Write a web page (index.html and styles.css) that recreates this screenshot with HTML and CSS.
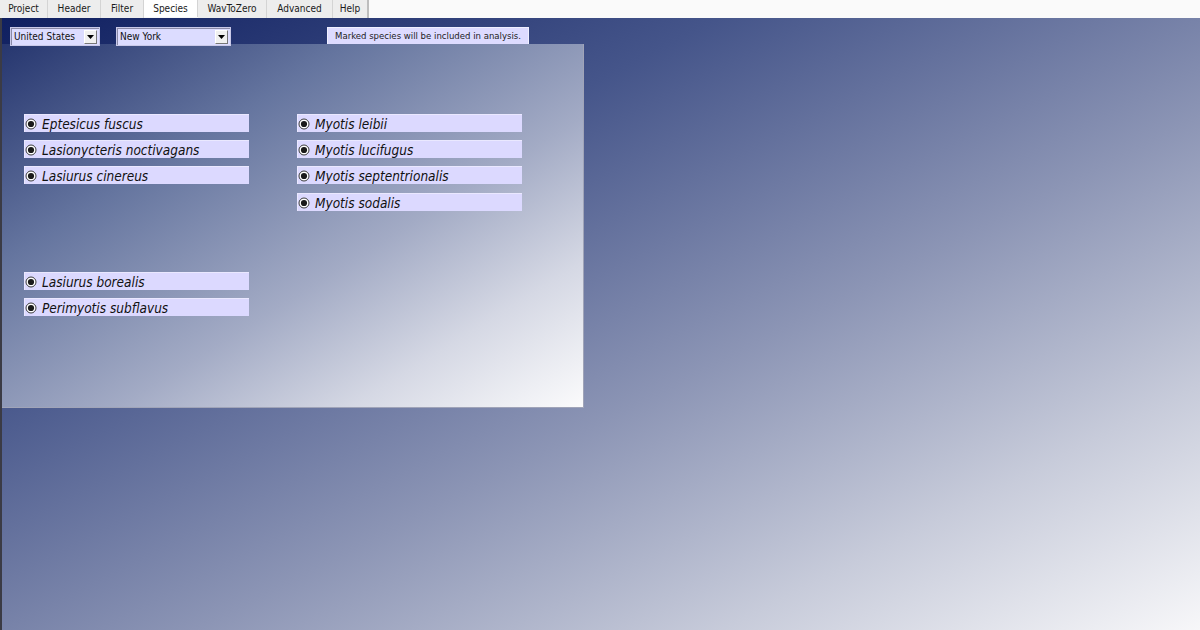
FILE: index.html
```html
<!DOCTYPE html>
<html>
<head>
<meta charset="utf-8">
<link rel="stylesheet" href="styles.css">
</head>
<body>
<div class="tabs">
  <div class="tab tab-project">Project</div>
  <div class="tab tab-header">Header</div>
  <div class="tab tab-filter">Filter</div>
  <div class="tab tab-species active">Species</div>
  <div class="tab tab-wav">WavToZero</div>
  <div class="tab tab-adv">Advanced</div>
  <div class="tab tab-help">Help</div>
  <div class="tab-rest"></div>
</div>
<div class="main">
  <div class="toolbar">
    <div class="select select-country"><span class="select-text">United States</span><span class="select-btn"><svg width="7" height="4" viewBox="0 0 7 4"><path d="M0 0H7L3.5 4Z" fill="#000"/></svg></span></div>
    <div class="select select-state"><span class="select-text">New York</span><span class="select-btn"><svg width="7" height="4" viewBox="0 0 7 4"><path d="M0 0H7L3.5 4Z" fill="#000"/></svg></span></div>
    <div class="note">Marked species will be included in analysis.</div>
  </div>
  <div class="panel">
    <div class="col col-left">
      <div class="item"><svg class="radio" width="12" height="12" viewBox="0 0 12 12"><circle cx="6" cy="6" r="5" fill="#fff" stroke="#3a3a3a" stroke-width="1"/><circle cx="6" cy="6" r="3.1" fill="#1a1a1a"/></svg><span>Eptesicus fuscus</span></div>
      <div class="item"><svg class="radio" width="12" height="12" viewBox="0 0 12 12"><circle cx="6" cy="6" r="5" fill="#fff" stroke="#3a3a3a" stroke-width="1"/><circle cx="6" cy="6" r="3.1" fill="#1a1a1a"/></svg><span>Lasionycteris noctivagans</span></div>
      <div class="item"><svg class="radio" width="12" height="12" viewBox="0 0 12 12"><circle cx="6" cy="6" r="5" fill="#fff" stroke="#3a3a3a" stroke-width="1"/><circle cx="6" cy="6" r="3.1" fill="#1a1a1a"/></svg><span>Lasiurus cinereus</span></div>
      <div class="item group-start"><svg class="radio" width="12" height="12" viewBox="0 0 12 12"><circle cx="6" cy="6" r="5" fill="#fff" stroke="#3a3a3a" stroke-width="1"/><circle cx="6" cy="6" r="3.1" fill="#1a1a1a"/></svg><span>Lasiurus borealis</span></div>
      <div class="item"><svg class="radio" width="12" height="12" viewBox="0 0 12 12"><circle cx="6" cy="6" r="5" fill="#fff" stroke="#3a3a3a" stroke-width="1"/><circle cx="6" cy="6" r="3.1" fill="#1a1a1a"/></svg><span>Perimyotis subflavus</span></div>
    </div>
    <div class="col col-right">
      <div class="item"><svg class="radio" width="12" height="12" viewBox="0 0 12 12"><circle cx="6" cy="6" r="5" fill="#fff" stroke="#3a3a3a" stroke-width="1"/><circle cx="6" cy="6" r="3.1" fill="#1a1a1a"/></svg><span>Myotis leibii</span></div>
      <div class="item"><svg class="radio" width="12" height="12" viewBox="0 0 12 12"><circle cx="6" cy="6" r="5" fill="#fff" stroke="#3a3a3a" stroke-width="1"/><circle cx="6" cy="6" r="3.1" fill="#1a1a1a"/></svg><span>Myotis lucifugus</span></div>
      <div class="item"><svg class="radio" width="12" height="12" viewBox="0 0 12 12"><circle cx="6" cy="6" r="5" fill="#fff" stroke="#3a3a3a" stroke-width="1"/><circle cx="6" cy="6" r="3.1" fill="#1a1a1a"/></svg><span>Myotis septentrionalis</span></div>
      <div class="item"><svg class="radio" width="12" height="12" viewBox="0 0 12 12"><circle cx="6" cy="6" r="5" fill="#fff" stroke="#3a3a3a" stroke-width="1"/><circle cx="6" cy="6" r="3.1" fill="#1a1a1a"/></svg><span>Myotis sodalis</span></div>
    </div>
  </div>
</div>
</body>
</html>
```
FILE: styles.css
```css
html, body {
  margin: 0;
  padding: 0;
}
body {
  width: 1200px;
  height: 630px;
  overflow: hidden;
  font-family: "DejaVu Sans", "Liberation Sans", sans-serif;
  font-size: 10px;
  color: #111;
}
.tabs {
  display: flex;
  height: 18px;
  background: #f7f7f7;
}
.tab {
  box-sizing: border-box;
  height: 18px;
  line-height: 17px;
  padding: 0;
  text-align: center;
  background: #ededed;
  border-right: 1px solid #d4d4d4;
  color: #1a1a1a;
  font-family: "DejaVu Sans Condensed", "DejaVu Sans", sans-serif;
  font-size: 10px;
}
.tab.active {
  background: #ffffff;
  height: 17px;
}
.tab-project { width: 48px; }
.tab-header { width: 53px; }
.tab-filter { width: 43px; }
.tab-species { width: 54px; }
.tab-wav { width: 69px; }
.tab-adv { width: 66px; }
.tab-help { width: 36px; border-right: 2px solid #bdbdbd; }
.tab-rest {
  flex: 1;
  background: #fafafa;
}
.main {
  box-sizing: border-box;
  height: 612px;
  border-left: 2px solid #3b3b45;
  padding-top: 9px;
  background: linear-gradient(to bottom right, #0f1f60 0%, #45558a 30%, #8c95b5 58%, #c7cbda 80%, #f7f7f9 100%);
}
.toolbar {
  display: flex;
  align-items: flex-start;
  height: 17px;
}
.select {
  box-sizing: border-box;
  display: flex;
  align-items: center;
  height: 19px;
  background: #dcdcff;
  border: 1px solid #c9c9e8;
  box-shadow: inset 1px 1px 0 #8a8aa8;
  position: relative;
  z-index: 1;
}
.select-text {
  flex: 1;
  padding-left: 3px;
  font-family: "DejaVu Sans Condensed", "DejaVu Sans", sans-serif;
  font-size: 10px;
  color: #111;
}
.select-btn {
  box-sizing: border-box;
  width: 13px;
  height: 14px;
  margin-right: 2px;
  background: #f0f0f0;
  border: 1px solid #fff;
  border-right-color: #777;
  border-bottom-color: #777;
  display: flex;
  align-items: center;
  justify-content: center;
}
.select-country {
  width: 90px;
  margin-left: 8px;
}
.select-state {
  width: 115px;
  margin-left: 16px;
}
.note {
  box-sizing: border-box;
  width: 202px;
  height: 17px;
  margin-left: 96px;
  background: #dddbff;
  border: 1px solid #efefff;
  border-bottom: none;
  text-align: center;
  line-height: 16px;
  font-family: "DejaVu Sans Condensed", "DejaVu Sans", sans-serif;
  font-size: 9.5px;
  color: #222;
  position: relative;
  z-index: 1;
}
.panel {
  box-sizing: border-box;
  width: 582px;
  height: 364px;
  padding: 70px 0 0 22px;
  display: flex;
  gap: 48px;
  background: linear-gradient(to bottom right, #26366f 0%, #65759f 30%, #a3abc5 60%, #d5d8e4 80%, #fbfbfc 100%);
  border-right: 1px solid #a0a4b8;
  border-bottom: 1px solid #a0a4b8;
}
.col {
  display: flex;
  flex-direction: column;
  gap: 8px;
}
.col-left { width: 225px; }
.col-right { width: 225px; }
.item {
  box-sizing: border-box;
  height: 18px;
  display: flex;
  align-items: center;
  background: #dcd9ff;
  border-top: 1px solid #eae8ff;
  border-left: 1px solid #eae8ff;
  padding-left: 0;
  padding-top: 1px;
  font-family: "DejaVu Sans Condensed", "DejaVu Sans", sans-serif;
  font-style: italic;
  font-size: 13.5px;
  color: #111;
}
.item .radio {
  flex: none;
  margin-right: 5px;
  margin-top: -1px;
}
.col-right .item:last-child {
  margin-top: 1px;
}
.group-start {
  margin-top: 80px;
}
```
